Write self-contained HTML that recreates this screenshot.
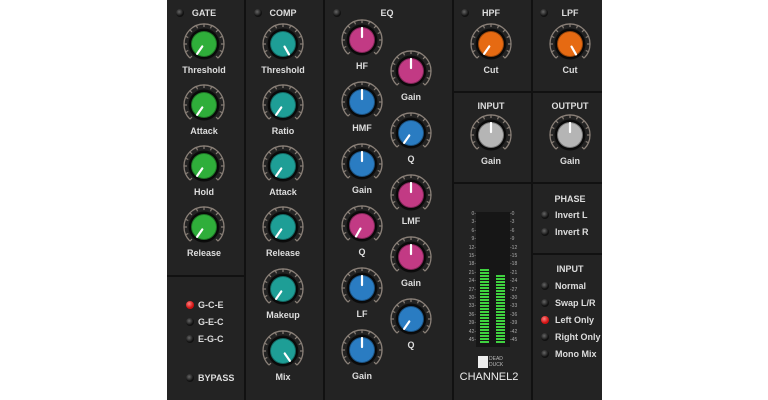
<!DOCTYPE html><html><head><style>
body{margin:0;width:768px;height:400px;background:#fff;overflow:hidden;font-family:"Liberation Sans",sans-serif;}
#p{position:absolute;left:167px;top:0;width:435px;height:400px;background:#232323;}
.l{position:absolute;background:#111;}
.t{position:absolute;color:#ddd;font-size:9px;font-weight:bold;transform:translateX(-50%);white-space:nowrap;}
.tl{position:absolute;color:#ddd;font-size:9px;font-weight:bold;white-space:nowrap;}
.led{position:absolute;width:8px;height:8px;border-radius:50%;background:radial-gradient(circle at 40% 35%,#666,#111 60%);}
.red{background:radial-gradient(circle at 40% 35%,#ff8080,#d01010 60%);}
svg{position:absolute;}
</style></head><body>
<div id="p"></div>
<div class="l" style="left:244px;top:0;width:2px;height:400px"></div>
<div class="l" style="left:323px;top:0;width:2px;height:400px"></div>
<div class="l" style="left:452px;top:0;width:2px;height:400px"></div>
<div class="l" style="left:531px;top:0;width:2px;height:400px"></div>
<div class="l" style="left:167px;top:275px;width:77px;height:2px"></div>
<div class="l" style="left:452px;top:91px;width:150px;height:2px"></div>
<div class="l" style="left:452px;top:182px;width:150px;height:2px"></div>
<div class="l" style="left:531px;top:253px;width:71px;height:2px"></div>
<div class="led" style="left:176px;top:9px"></div>
<div class="led" style="left:254px;top:9px"></div>
<div class="led" style="left:333px;top:9px"></div>
<div class="led" style="left:461px;top:9px"></div>
<div class="led" style="left:540px;top:9px"></div>
<div class="t" style="left:204px;top:8px">GATE</div>
<div class="t" style="left:283px;top:8px">COMP</div>
<div class="t" style="left:387px;top:8px">EQ</div>
<div class="t" style="left:491px;top:8px">HPF</div>
<div class="t" style="left:570px;top:8px">LPF</div>
<div class="t" style="left:491px;top:101px">INPUT</div>
<div class="t" style="left:570px;top:101px">OUTPUT</div>
<div class="t" style="left:570px;top:194px">PHASE</div>
<div class="t" style="left:570px;top:264px">INPUT</div>
<div class="led red" style="left:186px;top:301px"></div><div class="tl" style="left:198px;top:300px">G-C-E</div>
<div class="led" style="left:186px;top:318px"></div><div class="tl" style="left:198px;top:317px">G-E-C</div>
<div class="led" style="left:186px;top:335px"></div><div class="tl" style="left:198px;top:334px">E-G-C</div>
<div class="led" style="left:186px;top:374px"></div><div class="tl" style="left:198px;top:373px">BYPASS</div>
<div class="led" style="left:541px;top:211px"></div><div class="tl" style="left:555px;top:210px">Invert L</div>
<div class="led" style="left:541px;top:228px"></div><div class="tl" style="left:555px;top:227px">Invert R</div>
<div class="led" style="left:541px;top:282px"></div><div class="tl" style="left:555px;top:281px">Normal</div>
<div class="led" style="left:541px;top:299px"></div><div class="tl" style="left:555px;top:298px">Swap L/R</div>
<div class="led red" style="left:541px;top:316px"></div><div class="tl" style="left:555px;top:315px">Left Only</div>
<div class="led" style="left:541px;top:333px"></div><div class="tl" style="left:555px;top:332px">Right Only</div>
<div class="led" style="left:541px;top:350px"></div><div class="tl" style="left:555px;top:349px">Mono Mix</div>
<div id="m"></div>
<div style="position:absolute;left:478px;top:356px;width:10px;height:12px;background:#eee"></div>
<div style="position:absolute;left:489px;top:356px;color:#bbb;font-size:5px;line-height:6px">DEAD<br>DUCK</div>
<div class="t" style="left:489px;top:371px;font-size:11px;font-weight:normal;color:#eee">CHANNEL2</div>
<div id="k"></div>
<script>
var C={g:'#2fae3a',t:'#1e9e96',p:'#c23a84',b:'#2a7cc2',o:'#e66a12',w:'#b5b5b5'};
var K=[[204,44,'g',215,'Threshold'],[204,105,'g',215,'Attack'],[204,166,'g',215,'Hold'],[204,227,'g',215,'Release'],
[283,44,'t',150,'Threshold'],[283,105,'t',215,'Ratio'],[283,166,'t',215,'Attack'],[283,227,'t',215,'Release'],[283,289,'t',215,'Makeup'],[283,351,'t',145,'Mix'],
[362,40,'p',0,'HF'],[362,102,'b',0,'HMF'],[362,164,'b',0,'Gain'],[362,226,'p',210,'Q'],[362,288,'b',0,'LF'],[362,350,'b',0,'Gain'],
[411,71,'p',0,'Gain'],[411,133,'b',215,'Q'],[411,195,'p',0,'LMF'],[411,257,'p',0,'Gain'],[411,319,'b',215,'Q'],
[491,44,'o',215,'Cut'],[570,44,'o',150,'Cut'],[491,135,'w',0,'Gain'],[570,135,'w',0,'Gain']];
var h='';
K.forEach(function(k){var x=k[0],y=k[1],s='<svg style="left:'+(x-24)+'px;top:'+(y-24)+'px" width="48" height="48" viewBox="-24 -24 48 48">';
s+='<path d="M-14.1,14.1 A20,20 0 1 1 14.1,14.1" fill="none" stroke="#8a8078" stroke-width="1.3"/>';
for(var a=-135;a<=135;a+=22.5){var r=a*Math.PI/180;s+='<line x1="'+17*Math.sin(r)+'" y1="'+(-17*Math.cos(r))+'" x2="'+20*Math.sin(r)+'" y2="'+(-20*Math.cos(r))+'" stroke="#8a8078" stroke-width="1.2"/>';}
s+='<circle r="15.5" fill="#0c0c0c"/><circle r="13" fill="'+C[k[2]]+'"/><circle r="13" fill="none" stroke="rgba(0,0,0,.35)" stroke-width="2"/>';
var r=k[3]*Math.PI/180;s+='<line x1="'+3*Math.sin(r)+'" y1="'+(-3*Math.cos(r))+'" x2="'+12*Math.sin(r)+'" y2="'+(-12*Math.cos(r))+'" stroke="#fff" stroke-width="2.2" stroke-linecap="round"/></svg>';
h+=s+'<div class="t" style="left:'+x+'px;top:'+(y+21)+'px">'+k[4]+'</div>';});
document.getElementById('k').innerHTML=h;
var m='<div style="position:absolute;left:476px;top:212px;width:34px;height:135px;background:#161616"></div>';
var lab=[0,3,6,9,12,15,18,21,24,27,30,33,36,39,42,45];
lab.forEach(function(v,i){var y=211+i*8.4;m+='<div style="position:absolute;left:462px;top:'+y+'px;font-size:5px;color:#aaa;width:14px;text-align:right">'+v+'-</div><div style="position:absolute;left:510px;top:'+y+'px;font-size:5px;color:#aaa">-'+v+'</div>';});
for(var y=269;y<344;y+=3){m+='<div style="position:absolute;left:480px;top:'+y+'px;width:9px;height:2px;background:#3fd23f"></div>';if(y>=274)m+='<div style="position:absolute;left:496px;top:'+y+'px;width:9px;height:2px;background:#3fd23f"></div>';}
document.getElementById('m').innerHTML=m;
</script>
</body></html>
